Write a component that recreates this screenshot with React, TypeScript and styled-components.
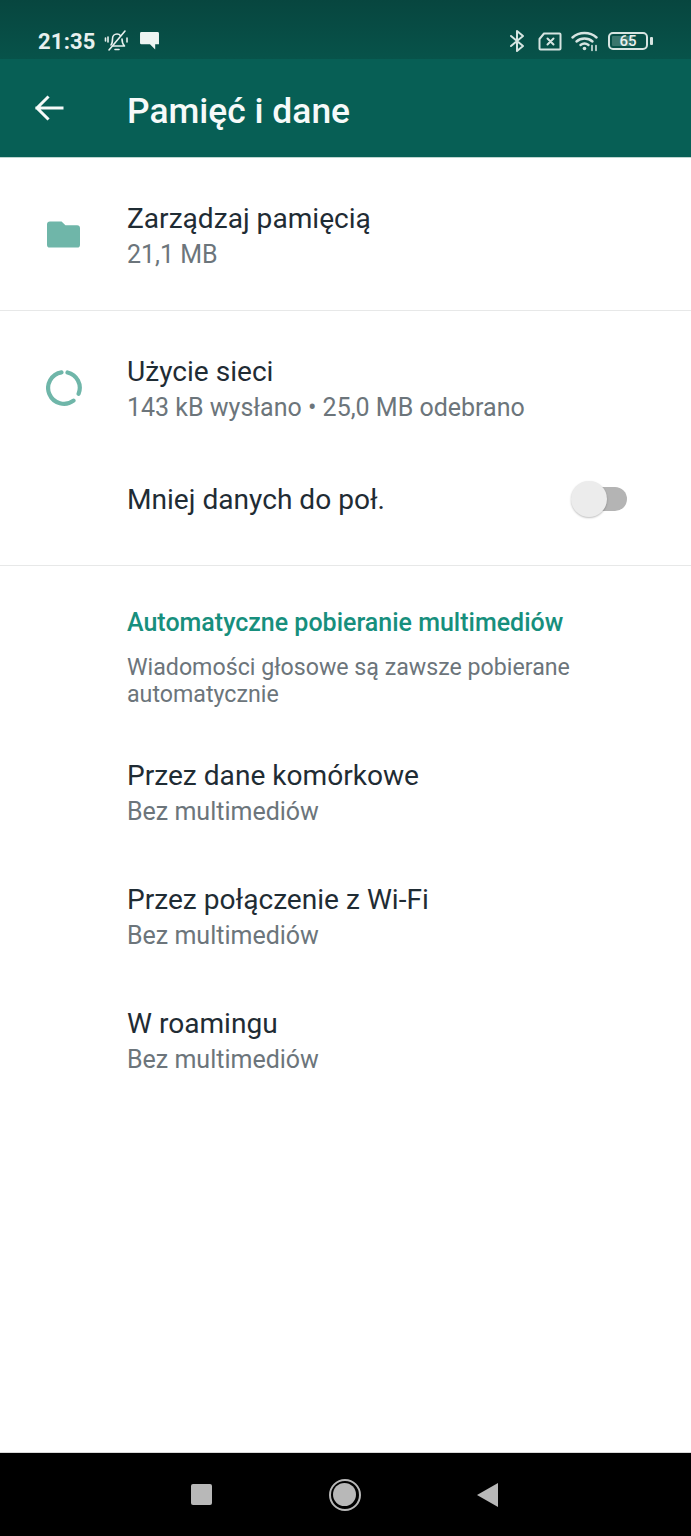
import styled, { createGlobalStyle } from "styled-components";

const GlobalStyle = createGlobalStyle`
  html, body {
    margin: 0;
    padding: 0;
    background: #ffffff;
  }
  body {
    font-family: Roboto, "Noto Sans", sans-serif;
  }
`;

const Page = styled.div`
  width: 691px;
  height: 1536px;
  display: flex;
  flex-direction: column;
  background: #ffffff;
  overflow: hidden;
`;

const StatusBar = styled.div`
  height: 59px;
  flex: none;
  box-sizing: border-box;
  padding: 25px 36px 0 38px;
  background: linear-gradient(#07463f, #07534a);
  display: flex;
  align-items: flex-start;
  color: #e8f0ee;
`;

const Clock = styled.div`
  font-size: 22px;
  font-weight: 700;
  line-height: 37px;
  margin-top: -2px;
  letter-spacing: 0.2px;
`;

const StatusLeft = styled.div`
  display: flex;
  align-items: center;
  gap: 10px;
  margin-left: 8px;
  height: 32px;
`;

const StatusRight = styled.div`
  margin-left: auto;
  display: flex;
  align-items: center;
  gap: 9px;
  height: 32px;

  & > svg:first-child {
    margin-right: 4px;
  }
`;

const Battery = styled.div`
  position: relative;
  width: 40px;
  height: 18px;
  box-sizing: border-box;
  border: 2px solid #d6e4e1;
  border-radius: 5px;
  padding: 2px;
  margin-right: 7px;
  display: flex;
  align-items: center;
  justify-content: center;
  font-size: 15px;
  font-weight: 500;
  color: #e8f0ee;
  background: linear-gradient(90deg, #3a766d 0 65%, transparent 65%) content-box;

  &::after {
    content: "";
    position: absolute;
    right: -7px;
    top: 3px;
    width: 3px;
    height: 8px;
    border-radius: 1px;
    background: #d6e4e1;
  }
`;

const Toolbar = styled.header`
  height: 99px;
  flex: none;
  box-sizing: border-box;
  background: #075f55;
  border-bottom: 1px solid #bcd5d0;
  display: flex;
  align-items: center;
  padding-left: 34px;
`;

const BackButton = styled.div`
  width: 93px;
  display: flex;
  align-items: center;
`;

const Title = styled.h1`
  margin: 0;
  font-size: 35.4px;
  font-weight: 500;
  color: #f6faf9;
  line-height: 40px;
  position: relative;
  top: 3px;
`;

const Section = styled.section<{ $bottom?: number }>`
  padding-bottom: ${(p) => p.$bottom ?? 0}px;
  border-bottom: 1px solid #e7e8e8;
`;

const Row = styled.div<{ $height: number }>`
  height: ${(p) => p.$height}px;
  display: flex;
  align-items: center;
`;

const IconWrap = styled.div`
  width: 127px;
  flex: none;
  display: flex;
  justify-content: center;
`;

const RowText = styled.div<{ $top: number }>`
  flex: 1;
  min-width: 0;
  padding-top: ${(p) => p.$top}px;
`;

const RowLabel = styled.div`
  flex: 1;
  min-width: 0;
  padding-left: 127px;
`;

const RowTitle = styled.div`
  font-size: 28.1px;
  line-height: 36px;
  color: #1f2c34;
`;

const RowSub = styled.div`
  font-size: 25px;
  line-height: 36px;
  color: #6c757b;
`;

const Track = styled.div`
  position: relative;
  width: 40px;
  height: 24px;
  margin: 0 64px 2px 0;
  border-radius: 12px;
  background: #b4b4b4;

  &::before {
    content: "";
    position: absolute;
    left: -16px;
    top: -6px;
    width: 36px;
    height: 36px;
    border-radius: 50%;
    background: #ececec;
    box-shadow: 0 1px 2px rgba(0, 0, 0, 0.25);
  }
`;

const Media = styled.section`
  flex: 1;
  padding: 41px 0 0 127px;
`;

const MediaHeading = styled.div`
  font-size: 25px;
  font-weight: 500;
  line-height: 32px;
  color: #178f7d;
`;

const MediaNote = styled.div`
  margin-top: 15px;
  margin-bottom: 50px;
  width: 470px;
  font-size: 23.2px;
  line-height: 27px;
  color: #6c757b;
`;

const MediaItem = styled.div`
  height: 124px;
`;

const NavBar = styled.nav`
  height: 84px;
  flex: none;
  background: #000000;
  border-top: 1px solid #d8d8d8;
  box-sizing: border-box;
  display: flex;
  align-items: center;
  justify-content: space-between;
  padding: 0 193px 0 191px;
`;

const SquareKey = styled.div`
  width: 21px;
  height: 21px;
  border-radius: 2px;
  background: #b8b8b8;
`;

const HomeKey = styled.div`
  width: 32px;
  height: 32px;
  box-sizing: border-box;
  border: 2px solid #b8b8b8;
  border-radius: 50%;
  display: flex;
  align-items: center;
  justify-content: center;

  &::after {
    content: "";
    width: 23px;
    height: 23px;
    border-radius: 50%;
    background: #b8b8b8;
  }
`;

const BackKey = styled.div`
  width: 0;
  height: 0;
  border-top: 12px solid transparent;
  border-bottom: 12px solid transparent;
  border-right: 21px solid #b8b8b8;
`;

const icon = "#6fb6a9";

const BellOff = () => (
  <svg width="26" height="24" viewBox="0 0 26 24" fill="none" stroke="#e8f0ee" strokeWidth="1.6" strokeLinecap="round" strokeLinejoin="round">
    <path d="M7 16c1.5-1.5 1.5-3 1.5-6 0-3 2-5 4.5-5 1.5 0 2.8.7 3.6 1.8" />
    <path d="M18 10c0 3 .5 5 2.5 7H9" />
    <path d="M11 20.500h4" />
    <path d="M5 21 21 2" />
    <path d="M4 8v5M1.500 9v3M23 9v4" />
  </svg>
);

const Message = () => (
  <svg width="19" height="18" viewBox="0 0 20 19">
    <path d="M1.500 0h17A1.500 1.500 0 0 1 20 1.500V13h-4v5.500L10.500 13H1.500A1.500 1.500 0 0 1 0 11.500v-10A1.500 1.500 0 0 1 1.500 0z" fill="#eef4f2" />
  </svg>
);

const Bluetooth = () => (
  <svg width="16" height="24" viewBox="0 0 16 24" fill="none" stroke="#d6e4e1" strokeWidth="2" strokeLinejoin="round" strokeLinecap="round">
    <path d="M2 7l12 10-6 5V2l6 5L2 17" />
  </svg>
);

const SimOff = () => (
  <svg width="24" height="19" viewBox="0 0 24 19" fill="none" stroke="#d6e4e1" strokeWidth="2" strokeLinejoin="round" strokeLinecap="round">
    <path d="M6 1.500h15.500a1 1 0 0 1 1 1v14a1 1 0 0 1-1 1H2.500a1 1 0 0 1-1-1V7z" />
    <path d="M9.500 6.500l6 6M15.500 6.500l-6 6" />
  </svg>
);

const Wifi = () => (
  <svg width="28" height="22" viewBox="0 0 28 22" fill="none" stroke="#d6e4e1" strokeWidth="2.400" strokeLinecap="round">
    <path d="M1.500 7.500C8 1.500 19 1.500 25.500 7.500" />
    <path d="M5.500 11.500c4.500-4 11.500-4 16 0" />
    <path d="M9.500 15c2.500-2 5.500-2 8 0" />
    <circle cx="13.500" cy="18.500" r="1.800" fill="#d6e4e1" stroke="none" />
    <path d="M21 15.500v5M25 15.500v5" strokeWidth="1.600" />
  </svg>
);

const Folder = () => (
  <svg width="33" height="27" viewBox="0 0 34 27">
    <path d="M3 0h12l4 4h12a3 3 0 0 1 3 3v17a3 3 0 0 1-3 3H3a3 3 0 0 1-3-3V3a3 3 0 0 1 3-3z" fill={icon} />
  </svg>
);

const DataRing = () => (
  <svg width="36" height="36" viewBox="0 0 36 36" fill="none" stroke={icon} strokeWidth="4.200" strokeLinecap="round">
    <path d="M15.500 2.400A15.800 15.800 0 1 0 27.500 30.600" />
    <path d="M21.500 2.500A15.800 15.800 0 0 1 32.600 23.800" />
  </svg>
);

const Arrow = () => (
  <svg width="30" height="28" viewBox="0 0 30 28" fill="none" stroke="#f6faf9" strokeWidth="3" strokeLinecap="square">
    <path d="M3 14h25M13.500 3.500 3 14l10.500 10.500" />
  </svg>
);

const autoItems = ["Przez dane komórkowe", "Przez połączenie z Wi-Fi", "W roamingu"];

export default function App() {
  return (
    <Page>
      <GlobalStyle />
      <StatusBar>
        <Clock>21:35</Clock>
        <StatusLeft>
          <BellOff />
          <Message />
        </StatusLeft>
        <StatusRight>
          <Bluetooth />
          <SimOff />
          <Wifi />
          <Battery>65</Battery>
        </StatusRight>
      </StatusBar>
      <Toolbar>
        <BackButton>
          <Arrow />
        </BackButton>
        <Title>Pamięć i dane</Title>
      </Toolbar>
      <Section>
        <Row $height={152}>
          <IconWrap>
            <Folder />
          </IconWrap>
          <RowText $top={6}>
            <RowTitle>Zarządzaj pamięcią</RowTitle>
            <RowSub>21,1 MB</RowSub>
          </RowText>
        </Row>
      </Section>
      <Section $bottom={29}>
        <Row $height={153}>
          <IconWrap>
            <DataRing />
          </IconWrap>
          <RowText $top={4}>
            <RowTitle>Użycie sieci</RowTitle>
            <RowSub>143 kB wysłano • 25,0 MB odebrano</RowSub>
          </RowText>
        </Row>
        <Row $height={72}>
          <RowLabel>
            <RowTitle>Mniej danych do poł.</RowTitle>
          </RowLabel>
          <Track />
        </Row>
      </Section>
      <Media>
        <MediaHeading>Automatyczne pobieranie multimediów</MediaHeading>
        <MediaNote>Wiadomości głosowe są zawsze pobierane automatycznie</MediaNote>
        {autoItems.map((item) => (
          <MediaItem key={item}>
            <RowTitle>{item}</RowTitle>
            <RowSub>Bez multimediów</RowSub>
          </MediaItem>
        ))}
      </Media>
      <NavBar>
        <SquareKey />
        <HomeKey />
        <BackKey />
      </NavBar>
    </Page>
  );
}
